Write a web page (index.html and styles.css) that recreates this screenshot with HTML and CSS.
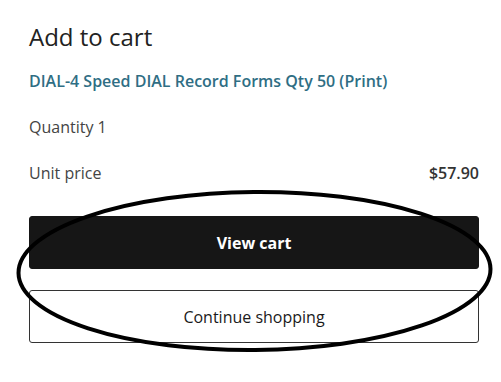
FILE: index.html
```html
<!DOCTYPE html>
<html>
<head>
<meta charset="utf-8">
<link rel="stylesheet" href="styles.css">
</head>
<body>
<div class="panel">
  <h1 class="title">Add to cart</h1>
  <a class="product" href="#">DIAL-4 Speed DIAL Record Forms Qty 50 (Print)</a>
  <div class="row qty">Quantity 1</div>
  <div class="row price"><span>Unit price</span><span class="amount">$57.90</span></div>
  <div class="actions">
    <button class="btn btn-primary">View cart</button>
    <button class="btn btn-secondary">Continue shopping</button>
  </div>
</div>
<svg class="annotation" width="501" height="382" viewBox="0 0 501 382">
  <ellipse cx="254.5" cy="271" rx="236" ry="79" fill="none" stroke="#000" stroke-width="4" transform="rotate(-0.5 254.5 271)"/>
</svg>
</body>
</html>
```

FILE: styles.css
```css
html, body {
  margin: 0;
  padding: 0;
  background: #fff;
}
body {
  font-family: "Open Sans", "Liberation Sans", sans-serif;
  color: #333;
  width: 501px;
  height: 382px;
  overflow: hidden;
  position: relative;
}
.panel {
  padding: 20px 22px 0 29px;
  display: flex;
  flex-direction: column;
}
.title {
  margin: 0;
  font-size: 24px;
  font-weight: 400;
  line-height: 34px;
  color: #222;
}
.product {
  margin-top: 16px;
  font-size: 16px;
  font-weight: 600;
  line-height: 22px;
  color: #2f6e84;
  text-decoration: none;
}
.row {
  font-size: 16px;
  line-height: 22px;
  color: #444;
}
.qty {
  margin-top: 24px;
}
.price {
  margin-top: 24px;
  display: flex;
  justify-content: space-between;
}
.amount {
  font-weight: 600;
  color: #333;
}
.actions {
  margin-top: 32px;
  display: flex;
  flex-direction: column;
  gap: 21px;
}
.btn {
  height: 53px;
  width: 100%;
  border-radius: 3px;
  font-family: "Open Sans", "Liberation Sans", sans-serif;
  font-size: 16px;
  cursor: pointer;
}
.btn-primary {
  background: #161616;
  color: #fff;
  border: 1px solid #161616;
  font-weight: 700;
}
.btn-secondary {
  background: #fff;
  color: #1a1a1a;
  border: 1px solid #333;
  font-weight: 500;
}
.annotation {
  position: absolute;
  left: 0;
  top: 0;
  pointer-events: none;
}
```
